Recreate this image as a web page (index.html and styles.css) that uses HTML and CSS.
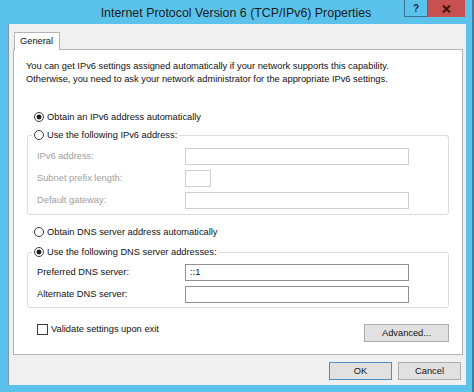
FILE: index.html
```html
<!DOCTYPE html>
<html lang="en">
<head>
    <meta charset="UTF-8">
    <title>Internet Protocol Version 6 (TCP/IPv6) Properties</title>
    <link rel="stylesheet" href="styles.css">
</head>
<body>
    <div class="window">
        <div class="titlebar">
            <div></div>
            <div class="title">Internet Protocol Version 6 (TCP/IPv6) Properties</div>
            <div class="caption-buttons">
                <span class="cap-btn help">?</span>
                <span class="cap-btn close">
                    <svg width="9" height="8" viewBox="0 0 9 8"><path d="M1 0.5 L8 7.5 M8 0.5 L1 7.5" stroke="#3b1212" stroke-width="2"/></svg>
                </span>
            </div>
        </div>

        <div class="client">
            <div class="tabs">
                <div class="tab active">General</div>
            </div>
            <div class="panel">
                <p class="intro">You can get IPv6 settings assigned automatically if your network supports this capability.<br>Otherwise, you need to ask your network administrator for the appropriate IPv6 settings.</p>

                <div class="option first"><span class="radio checked"></span>Obtain an IPv6 address automatically</div>
                <fieldset class="group group-ip">
                    <legend class="option"><span class="radio"></span>Use the following IPv6 address:</legend>
                    <div class="field disabled"><span class="field-label">IPv6 address:</span><span class="textbox wide"></span></div>
                    <div class="field disabled"><span class="field-label">Subnet prefix length:</span><span class="textbox small"></span></div>
                    <div class="field disabled"><span class="field-label">Default gateway:</span><span class="textbox wide"></span></div>
                </fieldset>

                <div class="option dns"><span class="radio"></span>Obtain DNS server address automatically</div>
                <fieldset class="group group-dns">
                    <legend class="option"><span class="radio checked"></span>Use the following DNS server addresses:</legend>
                    <div class="field"><span class="field-label">Preferred DNS server:</span><span class="textbox wide">::1</span></div>
                    <div class="field"><span class="field-label">Alternate DNS server:</span><span class="textbox wide"></span></div>
                </fieldset>

                <div class="footer-row">
                    <div class="check"><span class="checkbox"></span>Validate settings upon exit</div>
                    <span class="button advanced">Advanced...</span>
                </div>
            </div>
            <div class="dialog-buttons">
                <span class="button default">OK</span>
                <span class="button">Cancel</span>
            </div>
        </div>
    </div>
</body>
</html>
```

FILE: styles.css
```css
body {
    margin: 0;
    font-family: "Liberation Sans", Arial, sans-serif;
    font-size: 9.3px;
    color: #111;
}
.window {
    width: 474px;
    height: 392px;
    box-sizing: border-box;
    background-color: #5bc3eb;
    border-right: 2px solid #3f7f9b;
    display: flex;
    flex-direction: column;
}
.titlebar {
    height: 24px;
    flex: none;
    display: grid;
    grid-template-columns: 1fr auto 1fr;
}
.title {
    font-size: 12.4px;
    line-height: 27px;
    color: #1b1b1b;
    white-space: nowrap;
}
.caption-buttons {
    display: flex;
    justify-content: flex-end;
    align-items: flex-start;
    padding-right: 7px;
}
.cap-btn {
    height: 17px;
    box-sizing: border-box;
    display: flex;
    align-items: center;
    justify-content: center;
}
.help {
    width: 24px;
    border: 1px solid #3a7394;
    border-top: none;
    font-weight: bold;
    font-size: 10px;
    color: #1c2f4f;
}
.close {
    width: 37px;
    background-color: #c75050;
}
.client {
    flex: 1;
    margin: 0 6px 7px 8px;
    background-color: #f0f0f0;
    border-left: 1px solid #7f97a3;
    padding: 8px 3px 0 4px;
}
.tabs {
    display: flex;
    height: 18px;
    padding-left: 1px;
}
.tab {
    background-color: #fff;
    border: 1px solid #b4b4b4;
    border-bottom: none;
    padding: 0 6px 0 5px;
    line-height: 17px;
    height: 18px;
    box-sizing: border-box;
    position: relative;
    z-index: 1;
    margin-bottom: -1px;
}
.panel {
    height: 306px;
    box-sizing: border-box;
    background-color: #fff;
    border: 1px solid #b4b4b4;
    margin-top: -1px;
    padding: 10px 13px 0 13px;
}
.intro {
    margin: 0 0 0 -1px;
    line-height: 13px;
}
.option {
    display: flex;
    align-items: center;
    height: 18px;
}
.option.first {
    margin-top: 22px;
    padding-left: 7px;
}
.option.dns {
    margin-top: 8px;
    padding-left: 7px;
}
.radio {
    width: 10px;
    height: 10px;
    box-sizing: border-box;
    border: 1px solid #3a3a3a;
    border-radius: 50%;
    background-color: #fff;
    margin-right: 3px;
}
.radio.checked {
    background: radial-gradient(circle, #1a1a1a 2px, #fff 2.8px);
}
.group {
    margin: 0;
    border: 1px solid #dcdcdc;
    border-radius: 3px;
    padding: 1px 0 3px 9px;
}
.group legend {
    padding: 0 2px;
    margin-left: -5px;
}
.group-dns {
    margin-top: 2px;
    padding-top: 0;
    padding-bottom: 2px;
}
.field {
    display: flex;
    align-items: center;
    height: 22px;
}
.field-label {
    width: 148px;
}
.field.disabled .field-label {
    color: #a0a0a0;
}
.textbox {
    height: 17px;
    box-sizing: border-box;
    border: 1px solid #8e8f8f;
    background-color: #fff;
    padding-left: 4px;
    line-height: 15px;
}
.field.disabled .textbox {
    border-color: #cfcfcf;
}
.textbox.wide {
    width: 224px;
}
.textbox.small {
    width: 26px;
}
.footer-row {
    display: flex;
    justify-content: space-between;
    align-items: flex-start;
    margin-top: 12px;
}
.check {
    display: flex;
    align-items: center;
    height: 18px;
    padding-left: 10px;
}
.checkbox {
    width: 11px;
    height: 11px;
    box-sizing: border-box;
    border: 1px solid #3a3a3a;
    background-color: #fff;
    margin-right: 3px;
}
.button {
    height: 18px;
    box-sizing: border-box;
    border: 1px solid #adadad;
    background-color: #e1e1e1;
    display: flex;
    align-items: center;
    justify-content: center;
}
.advanced {
    width: 85px;
    margin-top: 4px;
}
.dialog-buttons {
    display: flex;
    justify-content: flex-end;
    gap: 6px;
    margin-top: 7px;
    padding-right: 2px;
}
.dialog-buttons .button {
    width: 63px;
}
.button.default {
    border-color: #4f8fc4;
}
```
